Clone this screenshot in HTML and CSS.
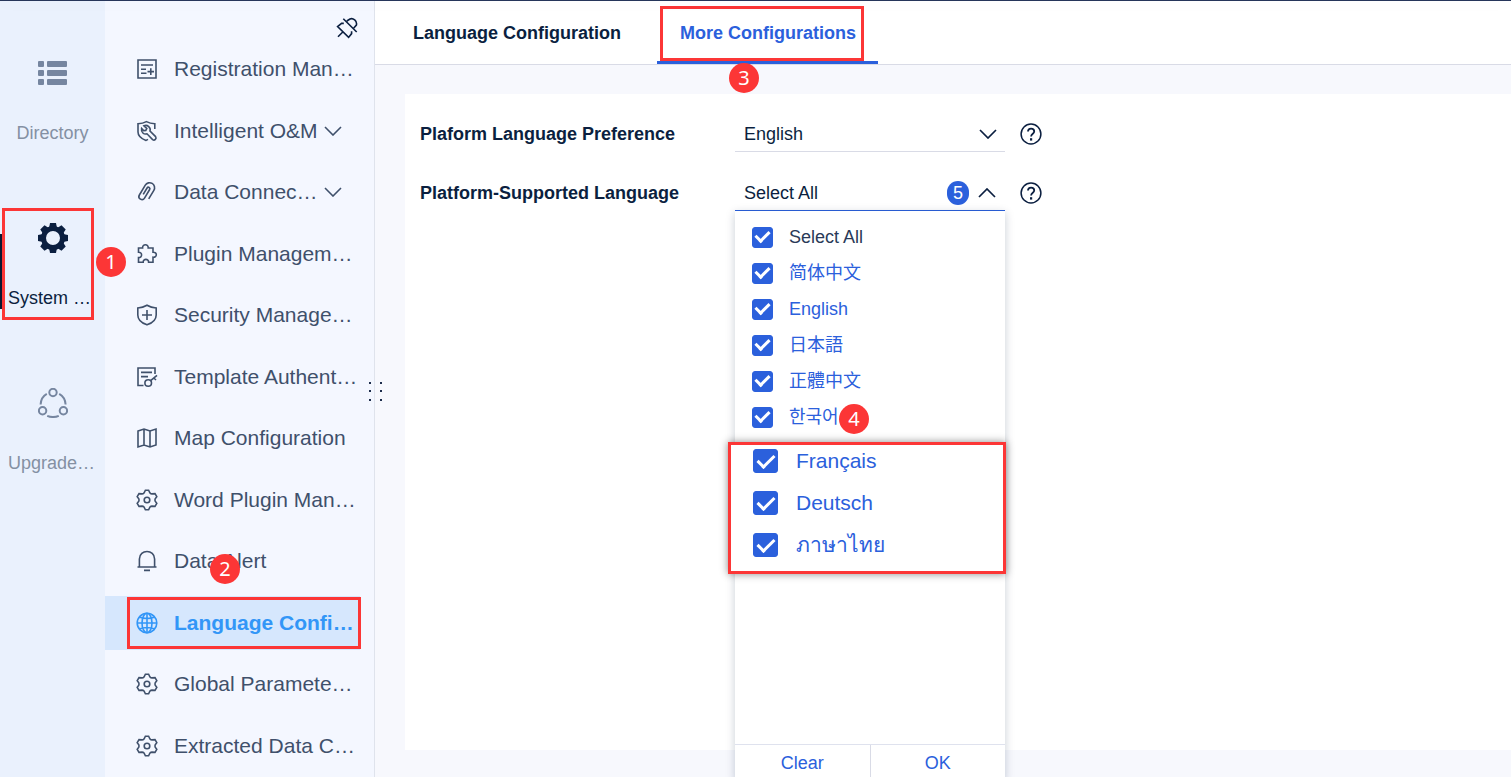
FILE: index.html
```html
<!DOCTYPE html>
<html lang="en">

<head>
    <meta charset="UTF-8">
    <meta name="viewport" content="width=device-width, initial-scale=1.0">
    <title>Language Configuration</title>
    <link rel="stylesheet" href="styles.css">
</head>

<body>
    <svg class="sprite" aria-hidden="true">
        <symbol id="icon-gear" viewBox="0 0 22 22">
            <path d="M9.4 1.2 H12.6 L14 4 Q14.8 4.9 16 4.9 L19 4.7 L20.8 7.6 L19.2 9.8 Q18.8 11 19.2 12.2 L20.8 14.4 L19 17.3 L16 17.1 Q14.8 17.1 14 18 L12.6 20.8 H9.4 L8 18 Q7.2 17.1 6 17.1 L3 17.3 L1.2 14.4 L2.8 12.2 Q3.2 11 2.8 9.8 L1.2 7.6 L3 4.7 L6 4.9 Q7.2 4.9 8 4 Z" />
            <circle cx="11" cy="11" r="2.8" />
        </symbol>
        <symbol id="icon-down" viewBox="0 0 18 10">
            <path d="M1 1 L9 9 L17 1" />
        </symbol>
        <symbol id="icon-help" viewBox="0 0 22 22">
            <circle cx="11" cy="11" r="9.9" />
            <path d="M8 8.6 C8 4.6 14.2 4.7 14.2 8.5 C14.2 10.8 11.1 10.8 11.1 13.6" stroke-width="1.8" />
            <path d="M11.1 15.2 V17.6" stroke-width="2.2" />
        </symbol>
    </svg>

    <header class="topbar"></header>

    <div class="layout">
        <nav class="rail">
            <a class="rail-item" href="#">
                <svg viewBox="0 0 30 30" fill="currentColor">
                    <rect x="0" y="3" width="6" height="6" rx="1" />
                    <rect x="9" y="3" width="20" height="6" rx="1" />
                    <rect x="0" y="12" width="6" height="6" rx="1" />
                    <rect x="9" y="12" width="20" height="6" rx="1" />
                    <rect x="0" y="21" width="6" height="6" rx="1" />
                    <rect x="9" y="21" width="20" height="6" rx="1" />
                </svg>
                <span>Directory</span>
            </a>
            <a class="rail-item current" href="#">
                <svg viewBox="0 0 30 30">
                    <circle cx="15" cy="15" r="9.5" fill="none" stroke="currentColor" stroke-width="5" />
                    <g fill="currentColor">
                        <path id="tooth" d="M11 5 L12 0 H18 L19 5 Z" />
                        <use href="#tooth" transform="rotate(45 15 15)" />
                        <use href="#tooth" transform="rotate(90 15 15)" />
                        <use href="#tooth" transform="rotate(135 15 15)" />
                        <use href="#tooth" transform="rotate(180 15 15)" />
                        <use href="#tooth" transform="rotate(225 15 15)" />
                        <use href="#tooth" transform="rotate(270 15 15)" />
                        <use href="#tooth" transform="rotate(315 15 15)" />
                    </g>
                </svg>
                <span class="truncated">System …</span>
                <i class="mark mark-system"></i>
                <b class="step step-1">1</b>
            </a>
            <a class="rail-item" href="#">
                <svg viewBox="0 0 30 30" fill="none" stroke="currentColor" stroke-width="2">
                    <circle cx="15" cy="4.5" r="3.7" />
                    <circle cx="4.6" cy="22.8" r="3.7" />
                    <circle cx="25.4" cy="22.8" r="3.7" />
                    <path d="M2.6 16.5 C2.9 11.8 5 8 8.8 5.9 M21.2 5.9 C25 8 27.3 11.8 27.6 16.5 M9.2 27.8 C13 29.4 17 29.4 20.8 27.8" />
                </svg>
                <span class="truncated">Upgrade…</span>
            </a>
        </nav>

        <aside class="sidebar">
            <div class="sidebar-head">
                <button class="pin" type="button" aria-label="Unpin">
                    <svg viewBox="0 0 22 22">
                        <path d="M7.8 6.4 H5.6 L1.6 9.6 L12.6 20.4 L15.6 16.6 V14.2 M6.8 15 L2 19.8 M10.8 4 L14 2 C17 0.6 21.4 4 20.4 8 L17.8 11 M7.3 1.7 L20.7 15" />
                    </svg>
                </button>
            </div>
            <ul class="menu">
                <li><a class="menu-item" href="#">
                    <svg viewBox="0 0 22 22"><path d="M2 2 H20 V20 H2 Z M5 7 H17 M5 11.2 H10 M5 15.2 H10.5 M11.5 13.6 H18 M14.8 10.3 V17" /></svg>
                    <span>Registration Man…</span>
                </a></li>
                <li><a class="menu-item" href="#">
                    <svg viewBox="0 0 22 22"><path d="M18.8 9 V3.8 C16 3.6 13.2 3 10.4 1.6 C7.8 3 4.8 3.6 2 3.8 V12 C2 16 5.6 18.8 10 20.4 L12 19.4" /><path d="M8 5.8 L10.8 8.4 L9.8 10.4 L7.6 10.6 L5.6 8.4 C4.8 12.4 8 14.8 11 13.8 L16.6 19.6 C18.6 21 21 18.6 19.6 16.6 L14 11 C15.2 7.4 11.4 4.4 8 5.8 Z" /></svg>
                    <span>Intelligent O&amp;M</span>
                    <svg class="arrow"><use href="#icon-down" /></svg>
                </a></li>
                <li><a class="menu-item" href="#">
                    <svg viewBox="0 0 22 22"><path transform="rotate(31 11 11)" d="M16 16 V6 a5 5 0 0 0 -10 0 V17.5 a3 3 0 0 0 6 0 V7.5 a1.5 1.5 0 0 0 -3 0 V15" /></svg>
                    <span>Data Connec…</span>
                    <svg class="arrow"><use href="#icon-down" /></svg>
                </a></li>
                <li><a class="menu-item" href="#">
                    <svg viewBox="0 0 22 22"><path d="M2.5 5 H6.6 C6.2 0.6 12.6 0.6 12.2 5 H17 V9.2 C21.4 8.8 21.4 14.6 17 14.2 V19.2 H12.6 C12.8 15.4 7 15.4 7.2 19.2 H2.5 V14.6 C6.6 14.8 6.6 9 2.5 9.2 Z" /></svg>
                    <span>Plugin Managem…</span>
                </a></li>
                <li><a class="menu-item" href="#">
                    <svg viewBox="0 0 22 22"><path d="M11 1.2 C8 3 5 3.8 1.8 4 V11 C1.8 16 6 19.2 11 20.8 C16 19.2 20.2 16 20.2 11 V4 C17 3.8 14 3 11 1.2 Z M11 6 V16 M6 11 H16" /></svg>
                    <span>Security Manage…</span>
                </a></li>
                <li><a class="menu-item" href="#">
                    <svg viewBox="0 0 22 22"><path d="M7.5 19.5 H2 V2 H19 V8 M5 6.4 H16 M5 10.6 H12 M14.6 14.6 L21 9.4 M17.8 12 L20 14" /><circle cx="12.2" cy="17" r="3.3" /></svg>
                    <span>Template Authent…</span>
                </a></li>
                <li><a class="menu-item" href="#">
                    <svg viewBox="0 0 22 22"><path d="M2 4 L8 2 L14 4 L20 2 V18 L14 20 L8 18 L2 20 Z M8 2 V18 M14 4 V20" /></svg>
                    <span>Map Configuration</span>
                </a></li>
                <li><a class="menu-item" href="#">
                    <svg><use href="#icon-gear" /></svg>
                    <span>Word Plugin Man…</span>
                </a></li>
                <li><a class="menu-item" href="#">
                    <svg viewBox="0 0 22 22"><path d="M1.5 17 H20.5 M3.4 17 V9 C3.4 -1 18.6 -1 18.6 9 V17 M8 20.4 H14" /></svg>
                    <span>Data Alert</span>
                    <b class="step step-2">2</b>
                </a></li>
                <li><a class="menu-item active" href="#">
                    <svg viewBox="0 0 22 22"><circle cx="11" cy="11" r="9.8" /><ellipse cx="11" cy="11" rx="5" ry="9.8" /><path d="M1.2 11 H20.8 M11 1.2 V20.8 M3.2 5 Q11 8 18.8 5 M3.2 17 Q11 14 18.8 17" /></svg>
                    <span>Language Confi…</span>
                    <i class="mark mark-language"></i>
                </a></li>
                <li><a class="menu-item" href="#">
                    <svg><use href="#icon-gear" /></svg>
                    <span>Global Paramete…</span>
                </a></li>
                <li><a class="menu-item" href="#">
                    <svg><use href="#icon-gear" /></svg>
                    <span>Extracted Data C…</span>
                </a></li>
            </ul>
            <svg class="resizer" viewBox="0 0 14 20">
                <path d="M1 1 h2 v2 h-2 Z M12 1 h2 v2 h-2 Z M1 9 h2 v2 h-2 Z M12 9 h2 v2 h-2 Z M1 18 h2 v2 h-2 Z M12 18 h2 v2 h-2 Z" />
            </svg>
        </aside>

        <main class="content">
            <div class="tabs" role="tablist">
                <button class="tab" type="button" role="tab">Language Configuration</button>
                <button class="tab selected" type="button" role="tab" aria-selected="true">More Configurations
                    <i class="mark mark-tab"></i>
                    <b class="step step-3">3</b>
                </button>
            </div>

            <form class="panel">
                <div class="row">
                    <label class="row-label" for="preference">Plaform Language Preference</label>
                    <div class="field">
                        <select id="preference">
                            <option>English</option>
                        </select>
                        <svg class="arrow"><use href="#icon-down" /></svg>
                    </div>
                    <svg class="help"><use href="#icon-help" /></svg>
                </div>
                <div class="row">
                    <label class="row-label" for="supported">Platform-Supported Language</label>
                    <div class="field open">
                        <button class="combo" id="supported" type="button" aria-expanded="true">
                            <span>Select All</span>
                            <span class="count">5</span>
                            <svg class="arrow up"><use href="#icon-down" /></svg>
                        </button>
                        <div class="dropdown">
                            <div class="options">
                                <label class="option all"><input type="checkbox" checked>Select All</label>
                                <label class="option" lang="zh-CN"><input type="checkbox" checked>简体中文</label>
                                <label class="option"><input type="checkbox" checked>English</label>
                                <label class="option" lang="ja"><input type="checkbox" checked>日本語</label>
                                <label class="option" lang="zh-TW"><input type="checkbox" checked>正體中文</label>
                                <label class="option" lang="ko"><input type="checkbox" checked>한국어<b class="step step-4">4</b></label>
                                <div class="extra">
                                    <label class="option"><input type="checkbox" checked>Français</label>
                                    <label class="option"><input type="checkbox" checked>Deutsch</label>
                                    <label class="option" lang="th"><input type="checkbox" checked>ภาษาไทย</label>
                                </div>
                            </div>
                            <div class="dropdown-foot">
                                <button type="button">Clear</button>
                                <button type="button">OK</button>
                            </div>
                        </div>
                    </div>
                    <svg class="help"><use href="#icon-help" /></svg>
                </div>
            </form>
        </main>
    </div>
</body>

</html>
```

FILE: styles.css
```css
*,
*::before,
*::after {
    box-sizing: border-box;
}

body {
    margin: 0;
    height: 100vh;
    display: flex;
    flex-direction: column;
    overflow: hidden;
    font-family: "Liberation Sans", Arial, "Noto Sans CJK SC", sans-serif;
    font-size: 18px;
    line-height: 20px;
    color: #0b1f40;
    background: #f7f8fd;
}

button,
select {
    font: inherit;
    color: inherit;
    background: none;
    border: none;
    padding: 0;
    cursor: pointer;
}

a {
    color: inherit;
    text-decoration: none;
}

svg {
    flex: none;
}

.sprite {
    position: absolute;
    width: 0;
    height: 0;
}

.topbar {
    flex: none;
    height: 1px;
    background: #26355a;
    position: relative;
    z-index: 5;
    box-shadow: 0 2px 14px rgba(40, 50, 90, 0.12);
}

.layout {
    flex: 1;
    min-height: 0;
    display: flex;
}

/* red callouts */
.mark {
    position: absolute;
    border: 3px solid #fc3636;
    pointer-events: none;
}

.step {
    position: absolute;
    z-index: 4;
    width: 30px;
    height: 30px;
    border-radius: 50%;
    background: #fc3636;
    color: #fff;
    font-family: "Noto Sans", sans-serif;
    font-size: 20px;
    font-weight: 400;
    line-height: 29px;
    text-align: center;
}

/* left rail */
.rail {
    flex: none;
    width: 105px;
    padding-top: 57px;
    display: flex;
    flex-direction: column;
    gap: 80px;
    background: #eaf1fd;
}

.rail-item {
    position: relative;
    display: flex;
    flex-direction: column;
    align-items: center;
    gap: 35px;
    color: #8490a3;
}

.rail-item svg {
    width: 30px;
    height: 30px;
    color: #7686a0;
}

.rail-item span {
    white-space: nowrap;
}

.rail-item .truncated {
    align-self: flex-start;
    margin-left: 8px;
}

.rail-item.current,
.rail-item.current svg {
    color: #0b1f40;
}

.rail-item.current::before {
    content: "";
    position: absolute;
    left: 0;
    top: 11px;
    width: 2px;
    height: 75px;
    background: #0b1730;
}

.mark-system {
    left: 2px;
    top: -15px;
    width: 92px;
    height: 112px;
}

.step-1 {
    left: 96px;
    top: 24px;
}

/* sidebar */
.sidebar {
    flex: none;
    position: relative;
    width: 270px;
    display: flex;
    flex-direction: column;
    background: #f4f7ff;
    border-right: 1px solid #dfe3ec;
}

.sidebar-head {
    display: flex;
    justify-content: flex-end;
    padding: 16px 16px 3px;
}

.pin,
.pin svg {
    display: block;
    width: 22px;
    height: 22px;
}

.pin svg {
    fill: none;
    stroke: #0b1f40;
    stroke-width: 1.6;
}

.menu {
    flex: 1;
    margin: 0;
    padding: 0 14px 4px 0;
    list-style: none;
    display: flex;
    flex-direction: column;
    justify-content: space-between;
}

.menu-item {
    position: relative;
    height: 54px;
    padding-left: 31px;
    display: flex;
    align-items: center;
    gap: 16px;
    font-size: 21px;
    white-space: nowrap;
    color: #3f506b;
}

.menu-item svg {
    width: 22px;
    height: 22px;
    fill: none;
    stroke: currentColor;
    stroke-width: 1.6;
}

.menu-item .arrow {
    width: 18px;
    height: 10px;
    margin-left: -10px;
}

.menu-item.active {
    background: #d6e7fd;
    color: #3296f7;
    font-weight: bold;
}

.mark-language {
    left: 22px;
    right: -1px;
    top: 1px;
    bottom: 1px;
}

.step-2 {
    left: 105px;
    top: 20px;
}

.resizer {
    position: absolute;
    top: 380px;
    right: -8px;
    width: 14px;
    height: 20px;
    z-index: 2;
    fill: #1d2d4c;
}

/* content */
.content {
    flex: 1;
    min-width: 0;
    display: flex;
    flex-direction: column;
}

.tabs {
    flex: none;
    height: 64px;
    padding-left: 15px;
    display: flex;
    gap: 14px;
    background: #fff;
    border-bottom: 1px solid #d9dbe6;
}

.tab {
    position: relative;
    padding: 4px 22px 0 23px;
    font-weight: bold;
    border-bottom: 3px solid transparent;
}

.tab.selected {
    color: #2b60dc;
    border-bottom-color: #2b60dc;
}

.mark-tab {
    left: 3px;
    top: 5px;
    width: 204px;
    height: 55px;
}

.step-3 {
    left: 72px;
    top: 62px;
}

.panel {
    flex: 1;
    margin: 29px 0 27px 30px;
    padding: 22px 15px;
    display: flex;
    flex-direction: column;
    gap: 23px;
    background: #fff;
}

.row {
    display: flex;
    align-items: center;
}

.row-label {
    width: 315px;
    font-weight: bold;
}

.field {
    position: relative;
    width: 270px;
    height: 36px;
    display: flex;
    align-items: center;
    border-bottom: 1px solid #d9dbe6;
}

.field.open {
    border-bottom-color: #2b60dc;
}

.field select {
    appearance: none;
    width: 100%;
    height: 100%;
    padding-left: 9px;
}

.field .arrow {
    width: 18px;
    height: 10px;
    fill: none;
    stroke: #0b1f40;
    stroke-width: 1.7;
}

.field > .arrow {
    position: absolute;
    right: 8px;
    pointer-events: none;
}

.combo {
    width: 100%;
    height: 100%;
    padding: 0 9px;
    display: flex;
    align-items: center;
    text-align: left;
}

.combo .arrow.up {
    transform: rotate(180deg);
}

.count {
    width: 22px;
    height: 24px;
    margin-left: auto;
    margin-right: 9px;
    border-radius: 12px;
    background: #2b60dc;
    color: #fff;
    line-height: 24px;
    text-align: center;
}

.help {
    width: 22px;
    height: 22px;
    margin-left: 15px;
    fill: none;
    stroke: #0b1f40;
    stroke-width: 1.5;
}

.dropdown {
    position: absolute;
    left: 0;
    top: 36px;
    width: 100%;
    z-index: 3;
    background: #fff;
    box-shadow: 0 2px 9px rgba(11, 31, 64, 0.22);
}

.options {
    min-height: 533px;
    padding-top: 8px;
    display: flex;
    flex-direction: column;
}

.option {
    position: relative;
    height: 36px;
    padding-left: 17px;
    display: flex;
    align-items: center;
    gap: 16px;
    color: #2b60dc;
    cursor: pointer;
}

.option.all {
    color: #2a3a58;
}

.option:lang(ja) {
    font-family: "Liberation Sans", "Noto Sans CJK JP", sans-serif;
}

.option:lang(zh-TW) {
    font-family: "Liberation Sans", "Noto Sans CJK TC", sans-serif;
}

.option:lang(ko) {
    font-family: "Liberation Sans", "Noto Sans CJK KR", sans-serif;
}

.option input {
    appearance: none;
    flex: none;
    width: 21px;
    height: 21px;
    margin: 0;
    border-radius: 3px;
    display: grid;
    place-content: center;
    border: 1px solid #2b60dc;
}

.option input:checked {
    background: #2b60dc;
}

.option input:checked::before {
    content: "";
    width: 9px;
    height: 14px;
    margin-bottom: 4px;
    border: solid #fff;
    border-width: 0 3px 3px 0;
    transform: rotate(45deg);
}

.step-4 {
    left: 104px;
    top: 5px;
}

.extra {
    margin: 7px -1px 0 -7px;
    padding-bottom: 10px;
    display: flex;
    flex-direction: column;
    gap: 10px;
    background: #fff;
    border: 3px solid #fc3636;
    box-shadow: 0 0 8px rgba(0, 0, 0, 0.45);
}

.extra .option {
    height: 32px;
    padding-left: 22px;
    gap: 18px;
    font-size: 21px;
}

.extra .option input {
    width: 25px;
    height: 24px;
}

.extra .option input:checked::before {
    width: 10px;
    height: 17px;
}

.dropdown-foot {
    display: flex;
    border-top: 1px solid #dfe2ee;
}

.dropdown-foot button {
    flex: 1;
    height: 36px;
    color: #2b60dc;
}

.dropdown-foot button + button {
    border-left: 1px solid #d9dbe6;
}
```
